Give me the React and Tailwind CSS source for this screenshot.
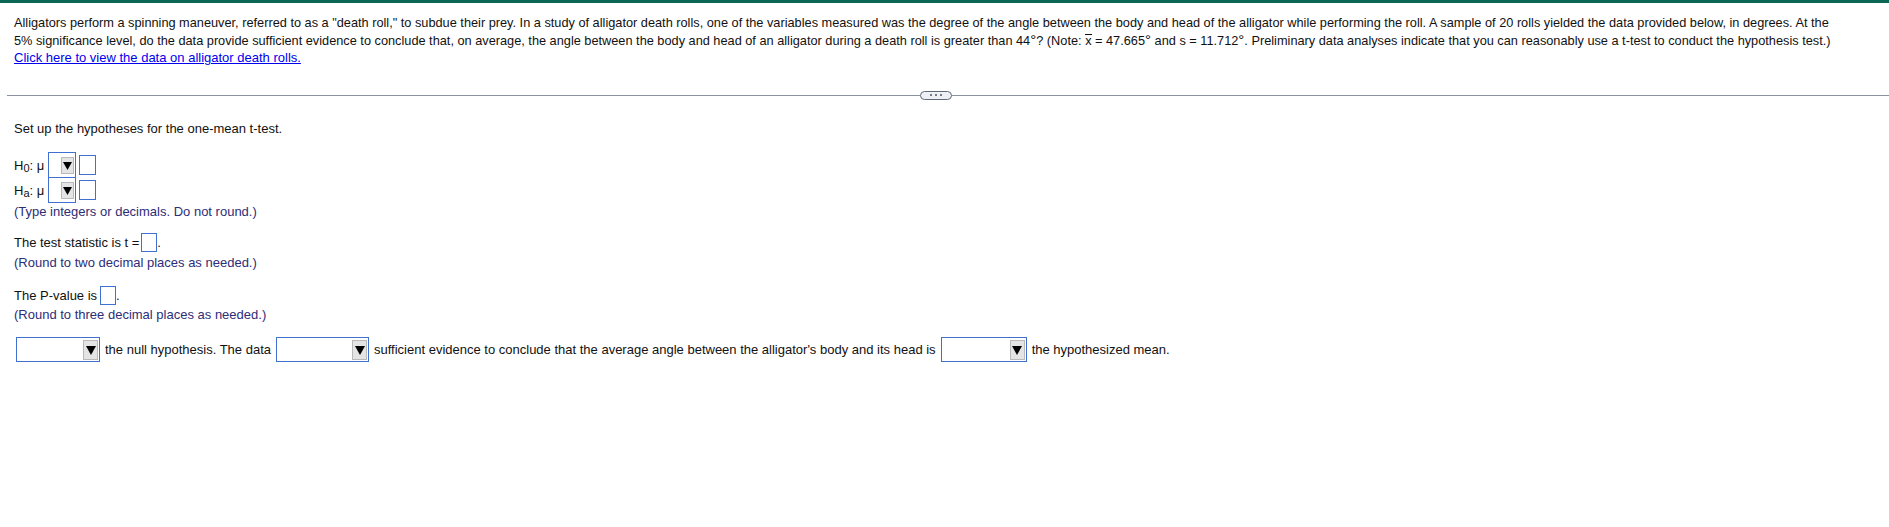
import React from 'react';

const FONT = { fontFamily: '"Liberation Sans", Arial, sans-serif' };

function Arrow({ className, size = 9 }) {
  return (
    <span className={`flex items-center justify-center bg-[#e4e4e4] border border-[#b9b9b9] ${className}`}>
      <svg width={size} height={size} viewBox="0 0 9 9">
        <polygon points="0,1 9,1 4.5,9" fill="#000" />
      </svg>
    </span>
  );
}

function Box({ className }) {
  return <span className={`inline-block bg-white border border-[#3f70d2] ${className}`} />;
}

function Select({ className }) {
  return (
    <span className={`flex items-center justify-end bg-white border border-[#3f70d2] pr-[1px] ${className}`}>
      <Arrow className="w-[15px] h-[20px]" size={10} />
    </span>
  );
}

function HypRow({ sub, className }) {
  return (
    <div className={`flex items-center h-[26px] ${className}`}>
      <span className="w-[34px] leading-none">
        H<sub className="text-[11px]">{sub}</sub>: μ
      </span>
      <span className="flex items-center justify-end w-[28px] h-[26px] border border-[#3f70d2] pr-[1px]">
        <Arrow className="w-[13px] h-[17px]" />
      </span>
      <Box className="ml-[3px] w-[17px] h-[20px]" />
    </div>
  );
}

export default function App() {
  return (
    <div className="w-[1889px] min-h-[527px] bg-white text-[13px] leading-[17px] text-[#111]" style={FONT}>
      <div className="h-[3px] bg-[#0b6656]" />

      <div className="px-[14px] pt-[11px]">
        <p className="whitespace-nowrap text-[12.75px]">
          Alligators perform a spinning maneuver, referred to as a "death roll," to subdue their prey. In a study of
          alligator death rolls, one of the variables measured was the degree of the angle between the body and head of
          the alligator while performing the roll. A sample of 20 rolls yielded the data provided below, in degrees. At
          the
          <br />
          5% significance level, do the data provide sufficient evidence to conclude that, on average, the angle between
          the body and head of an alligator during a death roll is greater than 44<span className="text-[15px]">°</span>?
          (Note: <span className="inline-block leading-[11px] border-t border-[#111]">x</span> = 47.665
          <span className="text-[15px]">°</span> and s = 11.712<span className="text-[15px]">°</span>. Preliminary
          data analyses indicate that you can reasonably use a t-test to conduct the hypothesis test.)
        </p>
        <a href="#" className="text-[#0000ee] underline">
          Click here to view the data on alligator death rolls.
        </a>
      </div>

      <div className="flex items-center ml-[7px] mt-[24px] h-[10px]">
        <div className="w-[913px] h-px bg-[#8a91a1]" />
        <div className="flex items-center justify-center gap-[3px] w-[32px] h-[9px] rounded-full border border-[#5f6a7d] bg-[#eef0f4]">
          <span className="w-[2px] h-[2px] rounded-full bg-[#4b5567]" />
          <span className="w-[2px] h-[2px] rounded-full bg-[#4b5567]" />
          <span className="w-[2px] h-[2px] rounded-full bg-[#4b5567]" />
        </div>
        <div className="flex-1 h-px bg-[#8a91a1]" />
      </div>

      <div className="px-[14px] pt-[20px]">
        <p>Set up the hypotheses for the one-mean t-test.</p>

        <HypRow sub="0" className="mt-[15px]" />
        <HypRow sub="a" className="-mt-px" />
        <p className="text-[#2d2d78]">(Type integers or decimals. Do not round.)</p>

        <div className="flex items-center mt-[12px] h-[20px]">
          <span>The test statistic is t =</span>
          <Box className="ml-[2px] w-[16px] h-[19px]" />
          <span>.</span>
        </div>
        <p className="text-[#2d2d78] mt-[2px]">(Round to two decimal places as needed.)</p>

        <div className="flex items-center mt-[14px] h-[20px]">
          <span>The P-value is</span>
          <Box className="ml-[3px] w-[16px] h-[19px]" />
          <span>.</span>
        </div>
        <p className="text-[#2d2d78] mt-[1px]">(Round to three decimal places as needed.)</p>

        <div className="flex items-center mt-[14px] pl-[2px] h-[25px] whitespace-nowrap">
          <Select className="w-[84px] h-[25px]" />
          <span className="ml-[5px]">the null hypothesis. The data</span>
          <Select className="ml-[5px] w-[93px] h-[25px]" />
          <span className="ml-[5px]">sufficient evidence to conclude that the average angle between the alligator's body and its head is</span>
          <Select className="ml-[5px] w-[86px] h-[25px]" />
          <span className="ml-[5px]">the hypothesized mean.</span>
        </div>
      </div>
    </div>
  );
}
